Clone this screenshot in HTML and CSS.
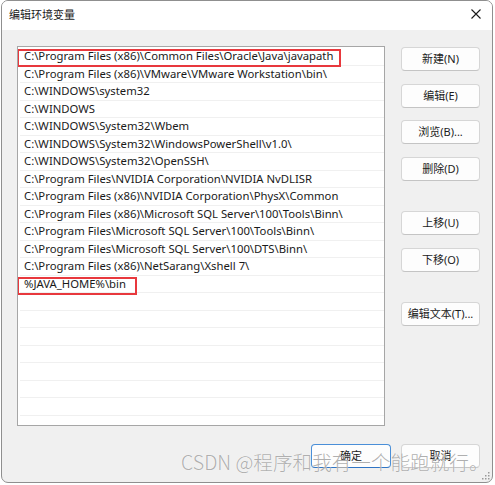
FILE: index.html
```html
<!DOCTYPE html>
<html lang="zh-CN">
<head>
<meta charset="utf-8">
<link rel="stylesheet" href="styles.css">
</head>
<body>
<div class="window">
  <div class="titlebar">
    <span class="title">编辑环境变量</span>
    <svg class="close" width="10" height="10" viewBox="0 0 10 10"><path d="M0.5 0.5 L9.5 9.5 M9.5 0.5 L0.5 9.5" stroke="#1a1a1a" stroke-width="1.1" fill="none"/></svg>
  </div>
  <div class="content">
    <div class="main">
      <div class="list">
        <div class="row">C:\Program Files (x86)\Common Files\Oracle\Java\javapath</div>
        <div class="row">C:\Program Files (x86)\VMware\VMware Workstation\bin\</div>
        <div class="row">C:\WINDOWS\system32</div>
        <div class="row">C:\WINDOWS</div>
        <div class="row">C:\WINDOWS\System32\Wbem</div>
        <div class="row">C:\WINDOWS\System32\WindowsPowerShell\v1.0\</div>
        <div class="row">C:\WINDOWS\System32\OpenSSH\</div>
        <div class="row">C:\Program Files\NVIDIA Corporation\NVIDIA NvDLISR</div>
        <div class="row">C:\Program Files (x86)\NVIDIA Corporation\PhysX\Common</div>
        <div class="row">C:\Program Files (x86)\Microsoft SQL Server\100\Tools\Binn\</div>
        <div class="row">C:\Program Files\Microsoft SQL Server\100\Tools\Binn\</div>
        <div class="row">C:\Program Files\Microsoft SQL Server\100\DTS\Binn\</div>
        <div class="row">C:\Program Files (x86)\NetSarang\Xshell 7\</div>
        <div class="row">%JAVA_HOME%\bin</div>
        <div class="row"></div>
        <div class="row"></div>
        <div class="row"></div>
        <div class="row"></div>
        <div class="row"></div>
        <div class="row"></div>
        <div class="row"></div>
        <div class="row"></div>
        <span class="mark mark-first"></span>
        <span class="mark mark-last"></span>
      </div>
      <div class="side">
        <button class="btn">新建(N)</button>
        <button class="btn">编辑(E)</button>
        <button class="btn">浏览(B)...</button>
        <button class="btn">删除(D)</button>
        <button class="btn group">上移(U)</button>
        <button class="btn">下移(O)</button>
        <button class="btn group">编辑文本(T)...</button>
      </div>
    </div>
    <div class="footer">
      <button class="btn wide primary">确定</button>
      <button class="btn">取消</button>
    </div>
  </div>
  <div class="watermark">CSDN @程序和我有一个能跑就行。</div>
  <svg class="grip" width="8" height="8" viewBox="0 0 8 8"><g fill="#9a9a9a"><rect x="6" y="0" width="1.5" height="1.5"/><rect x="3" y="3" width="1.5" height="1.5"/><rect x="6" y="3" width="1.5" height="1.5"/><rect x="0" y="6" width="1.5" height="1.5"/><rect x="3" y="6" width="1.5" height="1.5"/><rect x="6" y="6" width="1.5" height="1.5"/></g></svg>
</div>
</body>
</html>
```
FILE: styles.css
```css
html, body {
  margin: 0;
  padding: 0;
  background: #ffffff;
}
body {
  font-family: "Noto Sans", "Noto Sans CJK SC", sans-serif;
  color: #1a1a1a;
}
.window {
  position: relative;
  box-sizing: border-box;
  margin-left: 1px;
  width: 492px;
  height: 483px;
  border: 1px solid #8f8f8f;
  border-radius: 7px;
  overflow: hidden;
  background: #f0f0f0;
  display: flex;
  flex-direction: column;
}
.titlebar {
  height: 29px;
  background: #ffffff;
  display: flex;
  align-items: center;
  justify-content: space-between;
  padding: 0 11px 4px 7px;
  box-sizing: border-box;
  flex: none;
}
.title {
  font-family: "Noto Sans CJK SC", sans-serif;
  font-size: 11px;
  color: #1a1a1a;
}
.close {
  display: block;
}
.content {
  flex: 1;
  padding: 16px 12px 0 15px;
  display: flex;
  flex-direction: column;
}
.main {
  display: flex;
  gap: 16px;
}
.list {
  position: relative;
  box-sizing: border-box;
  width: 368px;
  height: 380px;
  background: #ffffff;
  border: 1px solid #a6a6a6;
  padding-top: 1px;
  overflow: hidden;
}
.row {
  box-sizing: border-box;
  height: 17.5px;
  line-height: 16.5px;
  margin-left: 2px;
  padding-left: 4px;
  border-bottom: 1px solid #f0f0f0;
  font-size: 11.3px;
  white-space: nowrap;
  color: #1a1a1a;
}
.mark {
  position: absolute;
  left: -1px;
  height: 18px;
  box-sizing: border-box;
  border: 2px solid #e8383d;
}
.mark-first {
  top: 2px;
  width: 324px;
}
.mark-last {
  top: 230px;
  width: 120px;
}
.side {
  width: 79px;
  display: flex;
  flex-direction: column;
  padding-top: 1px;
  gap: 12.5px;
}
.btn {
  box-sizing: border-box;
  height: 24px;
  width: 79px;
  margin: 0;
  padding: 0;
  background: #fdfdfd;
  border: 1px solid #d6d6d6;
  border-bottom-color: #c4c4c4;
  border-radius: 4px;
  font-family: "Noto Sans", "Noto Sans CJK SC", sans-serif;
  font-size: 11px;
  color: #1b1b1b;
  line-height: 22px;
  text-align: center;
}
.side .group {
  margin-top: 18px;
}
.footer {
  margin-top: 18px;
  display: flex;
  justify-content: flex-end;
  gap: 10px;
}
.wide {
  width: 80px;
}
.primary {
  border: 1px solid #4a8fd8;
  border-bottom-color: #2f74c4;
}
.watermark {
  position: absolute;
  left: 179px;
  top: 450px;
  font-family: "Noto Sans CJK SC", sans-serif;
  font-weight: 300;
  font-size: 19.6px;
  line-height: 22px;
  color: rgba(140, 140, 140, 0.7);
  white-space: nowrap;
  text-shadow: 0 0 1px #ffffff;
}
.grip {
  position: absolute;
  right: 2px;
  bottom: 2px;
}
```
